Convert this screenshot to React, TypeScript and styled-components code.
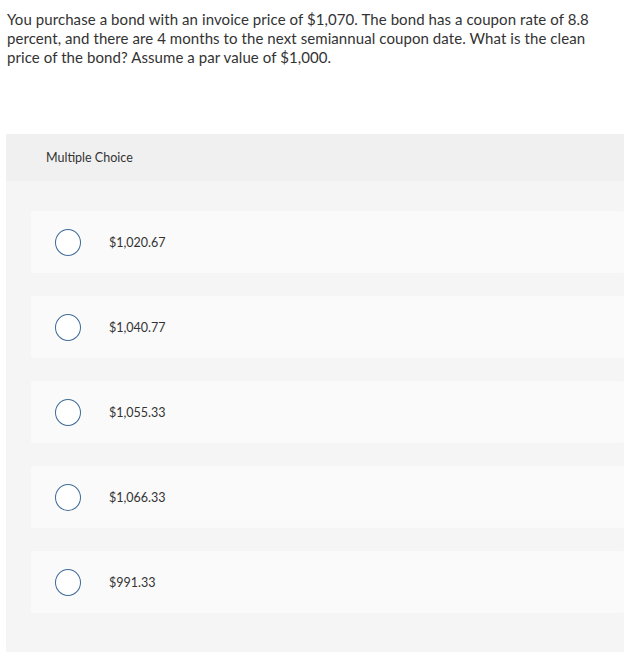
import React from "react";
import styled, { createGlobalStyle } from "styled-components";

const GlobalStyle = createGlobalStyle`
  html, body {
    margin: 0;
    padding: 0;
    background: #ffffff;
  }
`;

const Page = styled.div`
  padding: 10px 0 0 7px;
  font-family: "Lato", "Open Sans", sans-serif;
  color: #333333;
`;

const Question = styled.p`
  margin: 0;
  width: 600px;
  font-size: 15px;
  line-height: 19px;
  letter-spacing: 0.08px;
  color: #333333;
`;

const Panel = styled.section`
  margin-top: 67px;
  margin-left: -1px;
  background: #f5f5f5;
  padding-bottom: 60px;
`;

const PanelHeader = styled.header`
  height: 47px;
  display: flex;
  align-items: center;
  padding-left: 40px;
  background: #f0f0f0;
  font-size: 12.5px;
  color: #333333;
`;

const Options = styled.div`
  display: flex;
  flex-direction: column;
  gap: 23px;
  padding: 30px 0 0 25px;
`;

const Option = styled.label`
  height: 62px;
  display: flex;
  align-items: center;
  padding-left: 24px;
  background: #fafafa;
  border-radius: 2px;
  font-size: 12.5px;
  color: #333333;
  cursor: pointer;
`;

const Radio = styled.span`
  width: 24px;
  height: 25px;
  flex: none;
  border: 1.5px solid #3d6a98;
  border-radius: 50%;
  background: #ffffff;
  margin-right: 28px;
`;

const choices = ["$1,020.67", "$1,040.77", "$1,055.33", "$1,066.33", "$991.33"];

export default function App() {
  return (
    <>
      <GlobalStyle />
      <Page>
        <Question>
          You purchase a bond with an invoice price of $1,070. The bond has a coupon rate of 8.8
          percent, and there are 4 months to the next semiannual coupon date. What is the clean
          price of the bond? Assume a par value of $1,000.
        </Question>
        <Panel>
          <PanelHeader>Multiple Choice</PanelHeader>
          <Options>
            {choices.map((c) => (
              <Option key={c}>
                <Radio />
                {c}
              </Option>
            ))}
          </Options>
        </Panel>
      </Page>
    </>
  );
}
